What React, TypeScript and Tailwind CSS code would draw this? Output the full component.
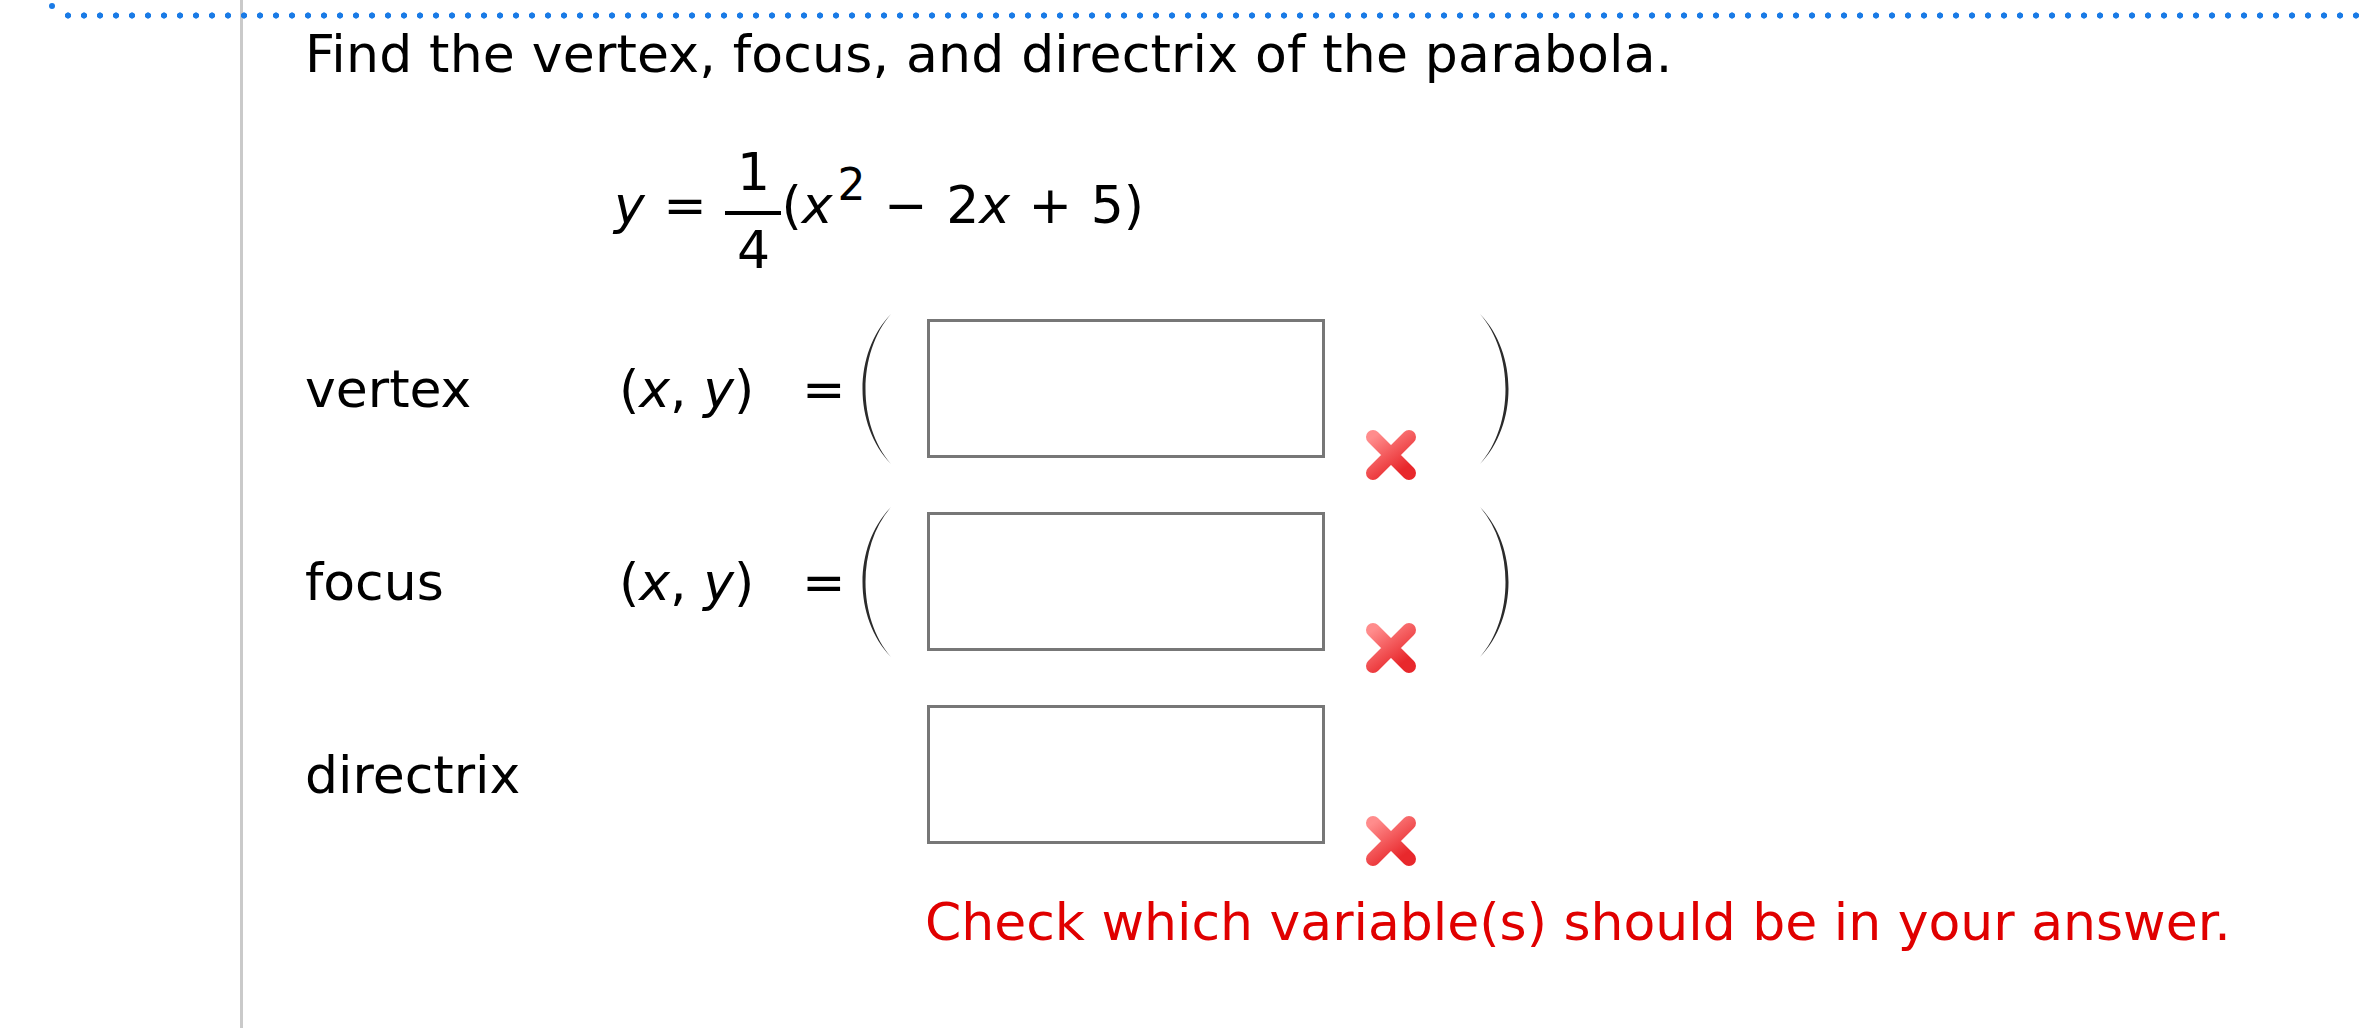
const font = "font-['Verdana','DejaVu_Sans',sans-serif]";

function Paren({ right }: { right?: boolean }) {
  return (
    <svg width="32" height="152" viewBox="0 0 32 152" className={right ? '-scale-x-100 shrink-0' : 'shrink-0'}>
      <path d="M31 1 C-7 40 -7 112 31 151 C-3 112 -3 40 31 1 Z" fill="#2b2b2b" />
    </svg>
  );
}

function WrongMark() {
  return (
    <svg width="56" height="56" viewBox="0 0 56 56" className="shrink-0 self-end mb-[-25px]">
      <defs>
        <linearGradient id="wrong-grad" x1="0" y1="0" x2="0.7" y2="1">
          <stop offset="0" stopColor="#ff8c8c" />
          <stop offset="1" stopColor="#e8282c" />
        </linearGradient>
      </defs>
      <path d="M10 10 L46 46 M46 10 L10 46" stroke="url(#wrong-grad)" strokeWidth="14" strokeLinecap="round" />
    </svg>
  );
}

function AnswerBox() {
  return <div className="w-[398px] h-[139px] shrink-0 border-[3px] border-[#777] bg-white" />;
}

function AnswerRow({ label, point }: { label: string; point?: boolean }) {
  return (
    <div className="flex items-center h-[139px]">
      <div className="w-[314px] shrink-0">{label}</div>
      {point ? (
        <>
          <div className="w-[241px] shrink-0 flex">
            <span className="w-[183px]">
              (<i>x</i>, <i>y</i>)
            </span>
            <span>=</span>
          </div>
          <Paren />
          <div className="w-[35px] shrink-0" />
        </>
      ) : (
        <div className="w-[308px] shrink-0" />
      )}
      <AnswerBox />
      <div className="w-[38px] shrink-0" />
      <WrongMark />
      {point && (
        <>
          <div className="w-[60px] shrink-0" />
          <Paren right />
        </>
      )}
    </div>
  );
}

export default function App() {
  return (
    <div className={`relative w-full h-[1028px] bg-white overflow-hidden text-black ${font}`}>
      {/* focus outline along the top */}
      <div className="absolute left-[49px] top-[3px] w-[6px] h-[6px] rounded-full bg-[#1a7be6]" />
      <div className="absolute left-[60px] right-0 top-[12px] h-[7px] bg-[radial-gradient(circle,#1a7be6_2.8px,transparent_3.4px)] bg-[length:16px_7px]" />

      <div className="flex h-full">
        <div className="w-[243px] shrink-0 border-r-[3px] border-[#cacaca]" />

        <div className="flex flex-col pl-[62px] text-[52px]">
          <p className="mt-[23px] leading-[62px] tracking-[0.2px]">Find the vertex, focus, and directrix of the parabola.</p>

          {/* equation */}
          <div className="mt-[61px] h-[130px] flex items-start pl-[309px] whitespace-pre leading-none [word-spacing:2px]">
            <span className="mt-[33px]">
              <i>y</i>{' = '}
            </span>
            <span className="flex flex-col items-center w-[56px]">
              <span className="h-[52px]">1</span>
              <span className="mt-[13px] h-[4px] w-[56px] bg-black" />
              <span className="mt-[9px] h-[52px]">4</span>
            </span>
            <span className="mt-[33px]">
              (<i>x</i>
            </span>
            <span className="mt-[17px] text-[44px] ml-[5px]">2</span>
            <span className="mt-[33px]">
              {' − 2'}
              <i>x</i>
              {' + 5)'}
            </span>
          </div>

          <div className="mt-[43px] flex flex-col gap-[54px]">
            <AnswerRow label="vertex" point />
            <AnswerRow label="focus" point />
            <AnswerRow label="directrix" />
          </div>

          <p className="mt-[47px] pl-[620px] leading-[62px] text-[#e00000] whitespace-nowrap">
            Check which variable(s) should be in your answer.
          </p>
        </div>
      </div>
    </div>
  );
}
